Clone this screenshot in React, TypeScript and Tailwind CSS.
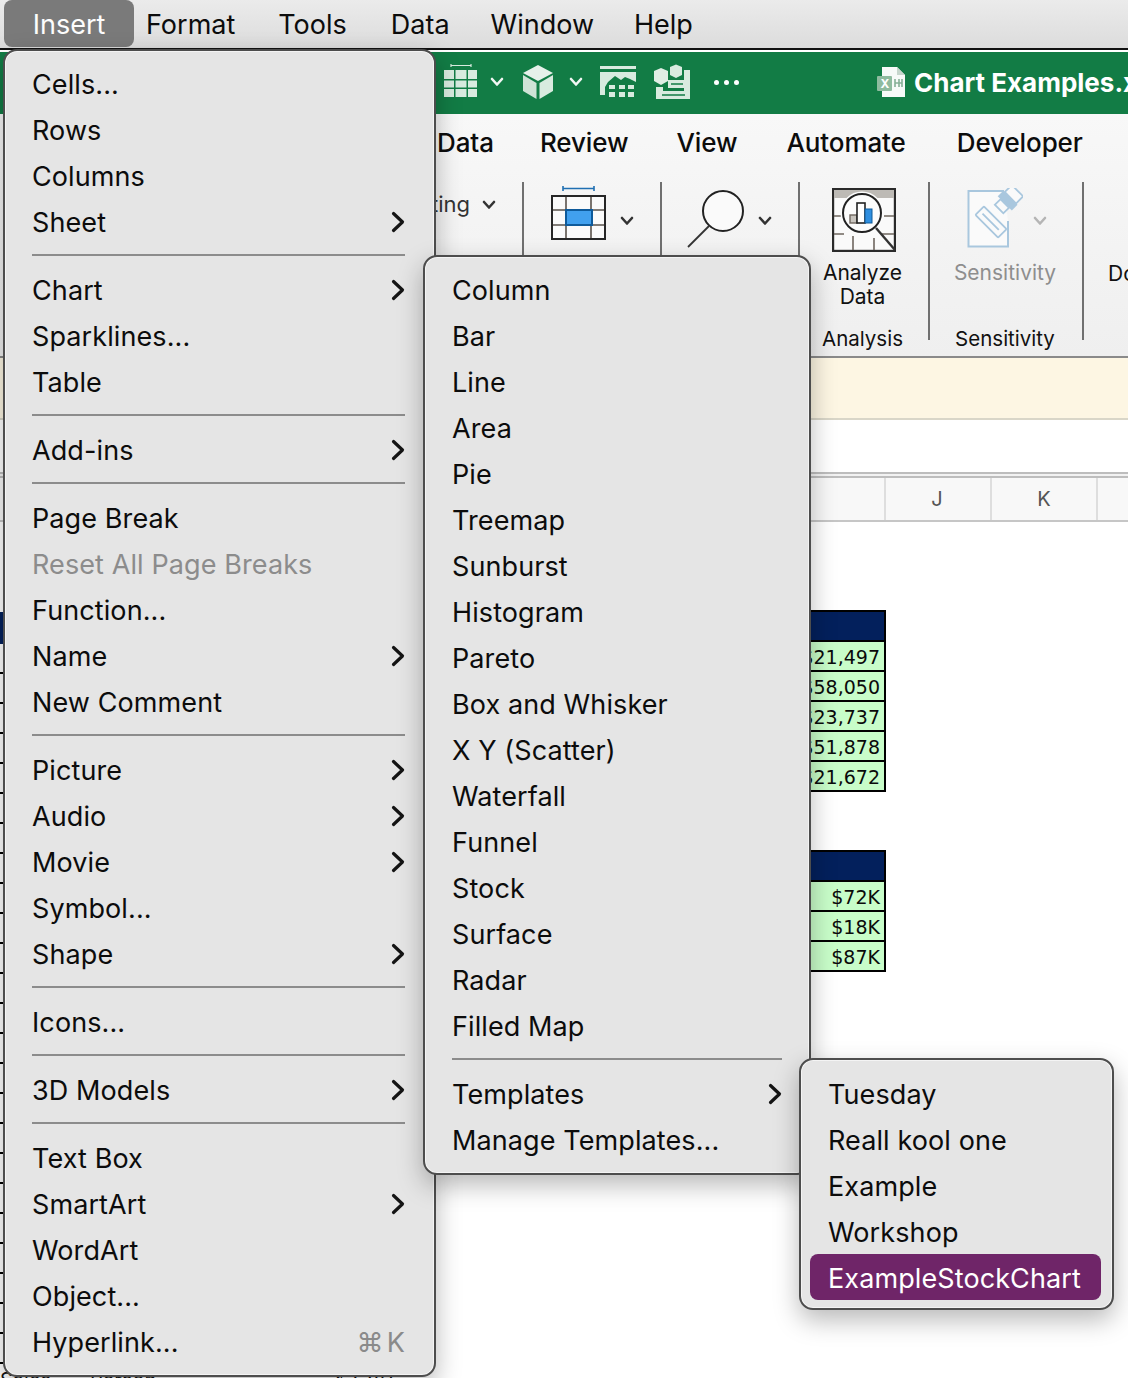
const font = "font-['Inter','Liberation_Sans',sans-serif]";

type Item = { label?: string; arrow?: boolean; disabled?: boolean; shortcut?: boolean; active?: boolean; sep?: boolean };

const insertItems: Item[] = [
  { label: "Cells..." },
  { label: "Rows" },
  { label: "Columns" },
  { label: "Sheet", arrow: true },
  { sep: true },
  { label: "Chart", arrow: true },
  { label: "Sparklines..." },
  { label: "Table" },
  { sep: true },
  { label: "Add-ins", arrow: true },
  { sep: true },
  { label: "Page Break" },
  { label: "Reset All Page Breaks", disabled: true },
  { label: "Function..." },
  { label: "Name", arrow: true },
  { label: "New Comment" },
  { sep: true },
  { label: "Picture", arrow: true },
  { label: "Audio", arrow: true },
  { label: "Movie", arrow: true },
  { label: "Symbol..." },
  { label: "Shape", arrow: true },
  { sep: true },
  { label: "Icons..." },
  { sep: true },
  { label: "3D Models", arrow: true },
  { sep: true },
  { label: "Text Box" },
  { label: "SmartArt", arrow: true },
  { label: "WordArt" },
  { label: "Object..." },
  { label: "Hyperlink...", shortcut: true },
];

const chartItems: Item[] = [
  { label: "Column" },
  { label: "Bar" },
  { label: "Line" },
  { label: "Area" },
  { label: "Pie" },
  { label: "Treemap" },
  { label: "Sunburst" },
  { label: "Histogram" },
  { label: "Pareto" },
  { label: "Box and Whisker" },
  { label: "X Y (Scatter)" },
  { label: "Waterfall" },
  { label: "Funnel" },
  { label: "Stock" },
  { label: "Surface" },
  { label: "Radar" },
  { label: "Filled Map" },
  { sep: true },
  { label: "Templates", arrow: true },
  { label: "Manage Templates..." },
];

const templateItems: Item[] = [
  { label: "Tuesday" },
  { label: "Reall kool one" },
  { label: "Example" },
  { label: "Workshop" },
  { label: "ExampleStockChart", active: true },
];

function Arrow() {
  return (
    <svg width="14" height="22" viewBox="0 0 14 22" className="-mt-[2px] shrink-0">
      <path d="M2.5 2.5 L11.5 11 L2.5 19.5" fill="none" stroke="#141414" strokeWidth="3.2" strokeLinecap="round" strokeLinejoin="round" />
    </svg>
  );
}

function Caret({ color = "#333" }: { color?: string }) {
  return (
    <svg width="14" height="10" viewBox="0 0 14 10" className="shrink-0">
      <path d="M2 2 L7 7.5 L12 2" fill="none" stroke={color} strokeWidth="2.6" strokeLinecap="round" strokeLinejoin="round" />
    </svg>
  );
}

function MenuRows({ items, inset }: { items: Item[]; inset: string }) {
  return (
    <>
      {items.map((it, i) =>
        it.sep ? (
          <div key={i} className="flex h-[22px] items-center pb-[2px]">
            <div className="h-[2px] w-full bg-[#8c8c8c]" />
          </div>
        ) : (
          <div
            key={i}
            className={`flex h-[46px] items-center justify-between rounded-[8px] text-[27px] tracking-[0.1px] ${inset} ${
              it.active ? "bg-[#6f2568] text-white" : it.disabled ? "text-[#8c8c8c]" : "text-[#0c0c0c]"
            }`}
          >
            <span>{it.label}</span>
            {it.arrow && <Arrow />}
            {it.shortcut && (
              <span className="flex items-center text-[#8a8a8a]">
                <span className="text-[27px]">⌘</span>
                <span className="ml-[3px]">K</span>
              </span>
            )}
          </div>
        ),
      )}
    </>
  );
}

const menuShell =
  "absolute rounded-[14px] border-2 border-[#4d4d4d] bg-[#e5e5e5] shadow-[inset_0_0_0_1px_#f4f4f4,0_10px_26px_rgba(0,0,0,0.28)]";

function TableIcon() {
  return (
    <svg width="36" height="36" viewBox="0 0 36 36" className="shrink-0">
      <path d="M8 1.5 H28 M8 0 V3 M28 0 V3" stroke="#d8ebdf" strokeWidth="1.2" fill="none" />
      <g fill="#d8ebdf">
        <rect x="1" y="6" width="10" height="9" />
        <rect x="12.5" y="6" width="11" height="9" />
        <rect x="25" y="6" width="9" height="9" />
        <rect x="1" y="16.5" width="10" height="7" />
        <rect x="12.5" y="16.5" width="11" height="7" />
        <rect x="25" y="16.5" width="9" height="7" />
        <rect x="1" y="25" width="10" height="8" />
        <rect x="12.5" y="25" width="11" height="8" />
        <rect x="25" y="25" width="9" height="8" />
      </g>
    </svg>
  );
}

function CubeIcon() {
  return (
    <svg width="32" height="36" viewBox="0 0 32 36" className="shrink-0">
      <path d="M16 1 L31 9 L16 17 L1 9 Z" fill="#e6f1ea" />
      <path d="M1 11 L14.5 19 V35 L1 27 Z" fill="#cfe3d6" />
      <path d="M31 11 L17.5 19 V35 L31 27 Z" fill="#d8ebdf" />
    </svg>
  );
}

function PictureIcon() {
  return (
    <svg width="38" height="34" viewBox="0 0 38 34" className="shrink-0">
      <rect x="1" y="1" width="36" height="3" fill="#d8ebdf" />
      <path d="M1 7 H37 V17 L31 14 L26 12 L22 15 L16 11 L9 17 L6 22 V30 H1 Z" fill="#d8ebdf" />
      <g fill="#d8ebdf">
        <rect x="10" y="20" width="6" height="4" />
        <rect x="20" y="20" width="6" height="4" />
        <rect x="29" y="20" width="6" height="4" />
        <rect x="10" y="27" width="6" height="5" />
        <rect x="20" y="27" width="6" height="5" />
        <rect x="29" y="27" width="6" height="5" />
      </g>
    </svg>
  );
}

function BoxesIcon() {
  return (
    <svg width="38" height="36" viewBox="0 0 38 36" className="shrink-0">
      <path d="M1 7 L8 4 L15 7 V17 L8 21 L1 17 Z" fill="#e0eee5" />
      <path d="M17 3 L23 0.5 L29 3 V11 L23 14 L17 11 Z" fill="#d8ebdf" />
      <path d="M30 6 H37 V35 H3 V23 H10 V27 H31 V6 Z" fill="#d8ebdf" />
      <rect x="15" y="16" width="20" height="8" fill="#d8ebdf" />
      <path d="M9 31 H32 M18 20 H30" stroke="#127c45" strokeWidth="1.4" />
    </svg>
  );
}

function GridPickIcon() {
  return (
    <svg width="58" height="56" viewBox="0 0 58 56" className="shrink-0">
      <path d="M13 2.5 H44 M13 0 V5 M44 0 V5" stroke="#1f6fb2" strokeWidth="1.6" fill="none" />
      <rect x="2" y="10" width="53" height="43" fill="#fafafa" stroke="#262626" strokeWidth="2" />
      <path d="M16 11 V52 M41 11 V52 M3 24 H54 M3 39 H54" stroke="#5a534c" strokeWidth="1.6" />
      <rect x="16" y="24" width="26" height="15" fill="#41a0ee" stroke="#0e5a9a" strokeWidth="2" />
    </svg>
  );
}

function SearchIcon() {
  return (
    <svg width="60" height="60" viewBox="0 0 60 60" className="shrink-0">
      <circle cx="37" cy="21" r="20" fill="#fafafa" stroke="#222" strokeWidth="2" />
      <path d="M23 36 L2 57" stroke="#333" strokeWidth="1.8" fill="none" />
    </svg>
  );
}

function AnalyzeIcon() {
  return (
    <svg width="64" height="64" viewBox="0 0 64 64" className="shrink-0">
      <rect x="1" y="1" width="62" height="62" fill="#fafafa" stroke="#2a2a2a" strokeWidth="2.4" />
      <rect x="2" y="2" width="60" height="8" fill="#bdbab5" />
      <path d="M2 28 H10 M52 28 H62 M2 46 H12 M50 46 H62 M21 48 V62 M42 50 V62" stroke="#6f675f" strokeWidth="1.6" />
      <circle cx="30" cy="25" r="20" fill="#fcfcfc" stroke="#fcfcfc" strokeWidth="3" />
      <circle cx="30" cy="25" r="19" fill="#fcfcfc" stroke="#222" strokeWidth="2" />
      <rect x="18" y="27" width="7" height="8" fill="#c9c5bf" stroke="#6f675f" strokeWidth="1.4" />
      <rect x="25" y="15" width="8" height="20" fill="#fff" stroke="#222" strokeWidth="1.6" />
      <rect x="33" y="21" width="7" height="14" fill="#2f8fe0" stroke="#0e5a9a" strokeWidth="1" />
      <path d="M44 40 L63 62" stroke="#333" strokeWidth="2.4" />
    </svg>
  );
}

function SensitivityIcon() {
  return (
    <svg width="56" height="60" viewBox="0 0 56 60" className="shrink-0">
      <path d="M37 3 H1.5 V58.5 H41 V33" fill="#fafafa" stroke="#a9c7de" strokeWidth="2" />
      <g transform="rotate(45 24 34)" fill="none" stroke="#a9c7de" strokeWidth="1.8">
        <rect x="8" y="28" width="32" height="12" rx="1" />
        <path d="M12 34 H35" />
      </g>
      <g transform="rotate(45 42 14)">
        <rect x="30" y="10" width="20" height="8" fill="#a9c7de" />
        <rect x="32" y="0" width="16" height="10" fill="#fafafa" stroke="#a9c7de" strokeWidth="1.8" />
        <rect x="34" y="18" width="12" height="8" fill="#fafafa" stroke="#a9c7de" strokeWidth="1.8" />
      </g>
    </svg>
  );
}

function DocIcon() {
  return (
    <svg width="28" height="30" viewBox="0 0 28 30" className="shrink-0">
      <path d="M5 0 H20 L28 8 V30 H5 Z" fill="#f7faf8" />
      <path d="M20 0 L28 8 H20 Z" fill="#c6d6cc" />
      <rect x="0" y="9" width="15" height="15" rx="1" fill="#8fbb9f" />
      <text x="3.5" y="21" fontSize="12" fontWeight="700" fill="#fff" fontFamily="Inter">X</text>
      <path d="M18 12 V20 M22 12 V20 M25 12 V20 M18 16 H25" stroke="#86b096" strokeWidth="1.6" />
    </svg>
  );
}

const Sep = () => <div className="mt-[68px] h-[158px] w-[2px] shrink-0 bg-[#707070]" />;

const table1 = ["21,497", "58,050", "23,737", "51,878", "21,672"];
const table2 = ["$72K", "$18K", "$87K"];

function SheetTable({ rows, prefix }: { rows: string[]; prefix: boolean }) {
  return (
    <div className="ml-[4px] w-[882px] border-2 border-black font-['DejaVu_Sans',sans-serif] text-[19px] text-[#0a0a0a]">
      <div className="h-[28px] bg-[#03205c]" />
      {rows.map((r) => (
        <div key={r} className="flex h-[30px] items-center justify-end border-t-2 border-black bg-[#c8fdc9] pr-[4px] pt-[2px]">
          {prefix ? `$${r}` : r}
        </div>
      ))}
    </div>
  );
}

export default function App() {
  return (
    <div className={`relative h-[1378px] w-[1128px] overflow-hidden bg-white ${font}`}>
      {/* mac menu bar */}
      <div className="flex h-[50px] items-start border-b-2 border-[#111] bg-gradient-to-b from-[#ebebeb] to-[#dcdcdc] pl-[4px] text-[27px] text-[#0c0c0c]">
        <div className="flex h-[47px] w-[130px] items-center justify-center rounded-[8px] bg-[#7a7a7a] pt-[3px] text-[#fdfdfd]">Insert</div>
        <div className="ml-[12px] flex h-[47px] items-center pt-[3px]">
          <span>Format</span>
          <span className="ml-[43px]">Tools</span>
          <span className="ml-[44px]">Data</span>
          <span className="ml-[41px]">Window</span>
          <span className="ml-[40px]">Help</span>
        </div>
      </div>

      {/* title bar */}
      <div className="mt-[2px] flex h-[62px] items-center overflow-hidden bg-[#127c45] pb-[2px] pl-[443px]">
        <TableIcon />
        <div className="ml-[11px]"><Caret color="#f2f7f4" /></div>
        <div className="ml-[18px]"><CubeIcon /></div>
        <div className="ml-[15px]"><Caret color="#f2f7f4" /></div>
        <div className="ml-[16px]"><PictureIcon /></div>
        <div className="ml-[16px]"><BoxesIcon /></div>
        <div className="ml-[23px] flex gap-[5px]">
          <span className="size-[5px] rounded-full bg-white" />
          <span className="size-[5px] rounded-full bg-white" />
          <span className="size-[5px] rounded-full bg-white" />
        </div>
        <div className="ml-[138px]"><DocIcon /></div>
        <span className="ml-[9px] shrink-0 whitespace-nowrap text-[26px] font-bold text-white">Chart Examples.xlsx</span>
      </div>

      {/* ribbon */}
      <div className="h-[244px] border-b-2 border-[#8a8a8a] bg-gradient-to-b from-[#f8f8f8] to-[#efefef]">
        <div className="flex h-[58px] items-center pb-[2px] pl-[437px] text-[26px] font-medium tracking-[-0.1px] text-[#0c0c0c]">
          <span>Data</span>
          <span className="ml-[46px]">Review</span>
          <span className="ml-[48px]">View</span>
          <span className="ml-[49px]">Automate</span>
          <span className="ml-[51px]">Developer</span>
        </div>
        <div className="-mt-[58px] flex h-[242px]">
          <div className="flex w-[522px] shrink-0 items-start justify-end pr-[26px] pt-[74px] text-[22px] text-[#333]">
            <span>Formatting</span>
            <span className="ml-[12px] mt-[12px]"><Caret /></span>
          </div>
          <Sep />
          <div className="flex w-[136px] shrink-0 items-start pl-[26px] pt-[72px]">
            <GridPickIcon />
            <span className="ml-[12px] mt-[30px]"><Caret /></span>
          </div>
          <Sep />
          <div className="flex w-[136px] shrink-0 items-start pl-[24px] pt-[76px]">
            <SearchIcon />
            <span className="ml-[12px] mt-[26px]"><Caret /></span>
          </div>
          <Sep />
          <div className="flex w-[128px] shrink-0 flex-col items-center pt-[74px] text-[21px] leading-[24px] text-[#111]">
            <AnalyzeIcon />
            <div className="mt-[9px] pr-[3px] text-center">Analyze<br />Data</div>
            <div className="mt-[18px] pr-[3px] text-[20.5px]">Analysis</div>
          </div>
          <Sep />
          <div className="flex w-[152px] shrink-0 flex-col items-center pt-[74px] text-[21px] leading-[24px]">
            <div className="flex h-[64px] items-start pl-[2px]">
              <SensitivityIcon />
              <span className="ml-[10px] mt-[28px]"><Caret color="#b5b5b5" /></span>
            </div>
            <div className="mt-[9px] pr-[2px] text-[#8e8e8e]">Sensitivity</div>
            <div className="mt-[42px] pr-[2px] text-[20.5px] text-[#111]">Sensitivity</div>
          </div>
          <Sep />
          <div className="whitespace-nowrap pl-[24px] pt-[148px] text-[21px] leading-[24px] text-[#111]">Document</div>
        </div>
      </div>

      {/* message bar, formula bar */}
      <div className="h-[62px] border-b-2 border-[#d9d6c8] bg-[#fdf6e3]" />
      <div className="h-[52px] bg-white" />
      <div className="h-[6px] border-y-2 border-[#bdbdbd] bg-[#f2f2f2]" />

      {/* column headers */}
      <div className="flex h-[44px] border-b-2 border-[#c6c6c6] bg-[#f8f8f8] pl-[884px] text-[20px] text-[#555]">
        <div className="flex w-[106px] items-center justify-center border-l-2 border-[#dedede] pr-[2px]">J</div>
        <div className="flex w-[106px] items-center justify-center border-l-2 border-[#dedede]">K</div>
        <div className="w-[32px] border-l-2 border-[#dedede]" />
      </div>

      {/* sheet */}
      <div className="flex">
        <div className="w-[3px] shrink-0 pt-[90px]">
          <div className="h-[32px] bg-[#03205c]" />
          {Array.from({ length: 25 }).map((_, i) => (
            <div key={i} className="h-[30px] border-b-2 border-black" />
          ))}
        </div>
        <div className="-ml-[3px] pt-[88px]">
          <SheetTable rows={table1} prefix />
          <div className="h-[58px]" />
          <SheetTable rows={table2} prefix={false} />
          <div className="mt-[396px] flex text-[20px] leading-[24px] text-[#111]">
            <span className="w-[90px]">Sales</span>
            <span className="w-[245px]">Person</span>
            <span>$7,781</span>
          </div>
        </div>
      </div>

      <div className={`${menuShell} left-[3px] top-[49px] w-[433px] pb-[10px] pl-[27px] pr-[29px] pt-[10px]`}>
        <MenuRows items={insertItems} inset="pt-[2px]" />
      </div>

      <div className={`${menuShell} left-[423px] top-[255px] w-[388px] px-[27px] py-[10px]`}>
        <MenuRows items={chartItems} inset="pt-[2px]" />
      </div>

      <div className={`${menuShell} left-[799px] top-[1058px] w-[315px] pb-[8px] pl-[9px] pr-[11px] pt-[10px]`}>
        <MenuRows items={templateItems} inset="pl-[18px] pr-[18px] pt-[4px]" />
      </div>
    </div>
  );
}
